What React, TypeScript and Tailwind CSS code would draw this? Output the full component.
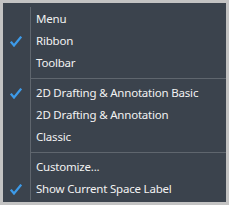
import React from "react";

const Check = () => (
  <svg width="12" height="11" viewBox="0 0 12 11" className="block">
    <path d="M1.5 6.5 L4 9.5 L10.5 1.5" fill="none" stroke="#3d9be9" strokeWidth="2.2" strokeLinecap="square" strokeLinejoin="miter" />
  </svg>
);

type Item = { label: string; checked?: boolean } | "sep";

const items: Item[] = [
  { label: "Menu" },
  { label: "Ribbon", checked: true },
  { label: "Toolbar" },
  "sep",
  { label: "2D Drafting & Annotation Basic", checked: true },
  { label: "2D Drafting & Annotation" },
  { label: "Classic" },
  "sep",
  { label: "Customize..." },
  { label: "Show Current Space Label", checked: true },
];

export default function App() {
  return (
    <div className="w-[229px] h-[205px] bg-[#c3c3c3] p-[3px]" style={{ fontFamily: '"Noto Sans", "Open Sans", sans-serif' }}>
      <div className="relative w-[223px] h-[199px] bg-[#3b434d] pt-[5px]">
        <div className="absolute left-[27px] top-[4px] bottom-[2px] w-px bg-[#5f666e]" />
        {items.map((it, i) =>
          it === "sep" ? (
            <div key={i} className="h-[8px] flex items-center pl-[28px]">
              <div className="h-px w-full bg-[#5f666e]" />
            </div>
          ) : (
            <div key={i} className="h-[22px] flex items-center">
              <div className="w-[33px] flex justify-center pr-[8px]">{it.checked ? <Check /> : null}</div>
              <span className="text-[11.5px] tracking-[-0.2px] text-[#f2f2f2] leading-none">{it.label}</span>
            </div>
          )
        )}
      </div>
    </div>
  );
}
